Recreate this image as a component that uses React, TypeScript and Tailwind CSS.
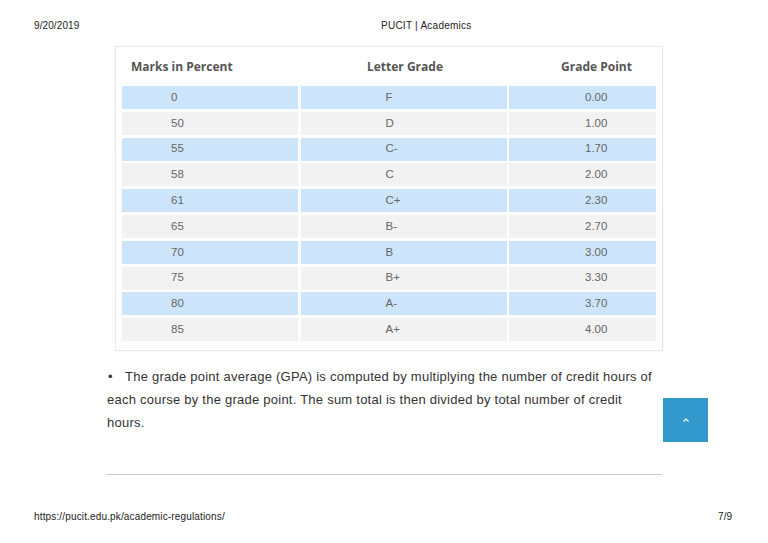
import React from 'react';

const rows: [string, string, string][] = [
  ['0', 'F', '0.00'],
  ['50', 'D', '1.00'],
  ['55', 'C-', '1.70'],
  ['58', 'C', '2.00'],
  ['61', 'C+', '2.30'],
  ['65', 'B-', '2.70'],
  ['70', 'B', '3.00'],
  ['75', 'B+', '3.30'],
  ['80', 'A-', '3.70'],
  ['85', 'A+', '4.00'],
];

const App: React.FC = () => {
  return (
    <div className="relative w-[768px] h-[543px] bg-white overflow-hidden font-['Liberation_Sans',Arial,sans-serif] text-[#222]">
      {/* Print header */}
      <div className="flex items-center h-[14px] mt-[18px] px-[34px] text-[10px] tracking-[0.1px]">
        <span className="w-[347px]">9/20/2019</span>
        <span className="tracking-[0.25px]">PUCIT | Academics</span>
      </div>

      {/* Grade table card */}
      <div className="mt-[14px] ml-[115px] w-[548px] h-[305px] border border-[#e8e8e8] bg-gradient-to-b from-white to-[#fdfdfd] shadow-[0_0_2px_rgba(0,0,0,0.05)]">
        <div className="flex items-center h-[39px] px-[6px] font-['Open_Sans',sans-serif] font-bold text-[12px] text-[#555]">
          <div className="w-[179px] pl-[9px]">Marks in Percent</div>
          <div className="w-[208px] text-center">Letter Grade</div>
          <div className="flex-1 pl-[52px]">Grade Point</div>
        </div>
        <div className="flex flex-col gap-[2.8px] px-[6px] text-[11.5px] text-[#666]">
          {rows.map(([marks, letter, point], i) => {
            const bg = i % 2 === 0 ? 'bg-[#cce5fb]' : 'bg-[#f2f2f2]';
            return (
              <div key={marks} className="flex gap-[2.5px] h-[23px]">
                <div className={`w-[176px] flex items-center pl-[49px] ${bg}`}>{marks}</div>
                <div className={`w-[206px] flex items-center pl-[85px] ${bg}`}>{letter}</div>
                <div className={`flex-1 flex items-center pl-[76px] ${bg}`}>{point}</div>
              </div>
            );
          })}
        </div>
      </div>

      {/* Note */}
      <div className="mt-[14px] ml-[107px] text-[13px] tracking-[0.24px] leading-[23px] text-[#333] whitespace-nowrap">
        <div className="flex">
          <span className="w-[18px] pl-[1px]">•</span>
          <span>The grade point average (GPA) is computed by multiplying the number of credit hours of</span>
        </div>
        <div>each course by the grade point. The sum total is then divided by total number of credit</div>
        <div>hours.</div>
      </div>

      <div className="mt-[40px] ml-[107px] w-[555px] h-px bg-[#c8c8c8]" />

      {/* Scroll to top */}
      <div className="absolute left-[663px] top-[398px] w-[45px] h-[44px] bg-[#3399cc] flex items-center justify-center">
        <svg width="8" height="6" viewBox="0 0 8 6" fill="none">
          <path d="M1.5 4.5 L4 2 L6.5 4.5" stroke="white" strokeWidth="1.2" />
        </svg>
      </div>

      {/* Print footer */}
      <div className="absolute left-0 right-0 top-[509px] flex items-center justify-between h-[14px] pl-[34px] pr-[36px] text-[10px]">
        <span className="tracking-[0.15px]">https://pucit.edu.pk/academic-regulations/</span>
        <span>7/9</span>
      </div>
    </div>
  );
};

export default App;
